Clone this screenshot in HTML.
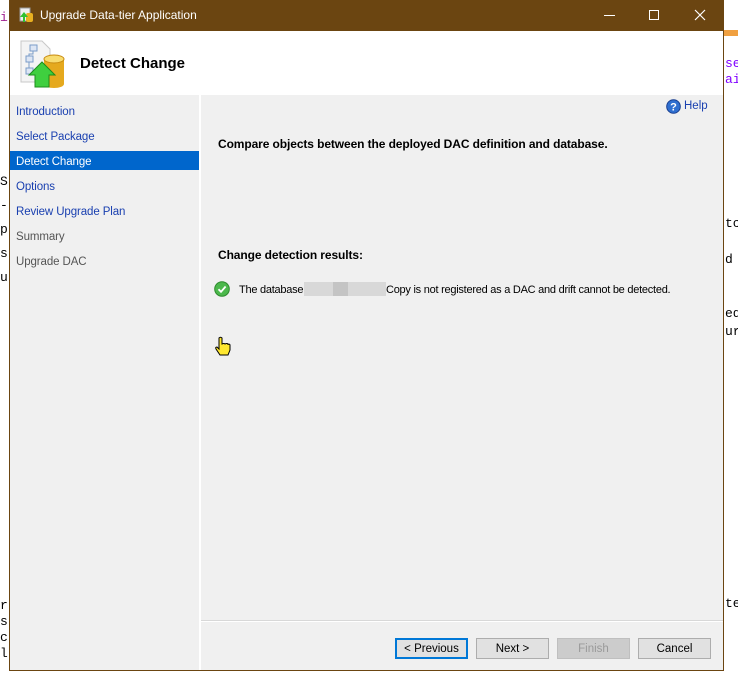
<!DOCTYPE html>
<html><head><meta charset="utf-8"><style>
*{margin:0;padding:0;box-sizing:border-box}
body{width:738px;height:676px;background:#fff;position:relative;overflow:hidden;font-family:"Liberation Sans",Arial,sans-serif;font-size:11px;color:#000}
.abs{position:absolute;white-space:nowrap}
.mono{font-family:"Liberation Mono",monospace;font-size:13px;position:absolute}
.nav{position:absolute;left:10px;top:4px;width:189px}
.nav div{position:absolute;left:6px;font-size:11.5px;color:#1a40b0;white-space:nowrap;letter-spacing:-0.1px}
.btn{position:absolute;top:638px;height:21px;width:73px;background:#e1e1e1;border:1px solid #adadad;text-align:center;line-height:20px;font-size:11.5px}
.t{letter-spacing:-0.25px}
</style></head><body>
<div class="mono" style="left:0;top:174px">S</div>
<div class="mono" style="left:0;top:198px">-</div>
<div class="mono" style="left:0;top:222px">p</div>
<div class="mono" style="left:0;top:246px">s</div>
<div class="mono" style="left:0;top:270px">u</div>
<div class="mono" style="left:0;top:598px">r</div>
<div class="mono" style="left:0;top:614px">s</div>
<div class="mono" style="left:0;top:630px">c</div>
<div class="mono" style="left:0;top:646px">l</div>
<div class="mono" style="left:0;top:10px;color:#a02090">i</div>
<div class="abs" style="left:724px;top:30px;width:14px;height:6px;background:#f0a040"></div>
<div class="mono" style="left:725px;top:56px;color:#8000ff">se</div>
<div class="mono" style="left:725px;top:72px;color:#8000ff">ai</div>
<div class="mono" style="left:725px;top:216px">tc</div>
<div class="mono" style="left:725px;top:252px">d</div>
<div class="mono" style="left:725px;top:306px">ed</div>
<div class="mono" style="left:725px;top:324px">ur</div>
<div class="mono" style="left:725px;top:596px">te</div>

<div class="abs" style="left:9px;top:0;width:715px;height:671px;background:#6b4511"></div>
<div class="abs" style="left:10px;top:31px;width:713px;height:639px;background:#f0f0f0"></div>
<svg class="abs" style="left:18px;top:7px" width="16" height="16"><rect x="2" y="1" width="10" height="13" fill="#eee" stroke="#999"/><rect x="8" y="6" width="7" height="9" rx="2" fill="#e8b020"/><path d="M5 15V10H2L6 5 10 10H7V15Z" fill="#30c030"/></svg>
<div class="abs" style="left:40px;top:8px;color:#fff;font-size:12px">Upgrade Data-tier Application</div>
<div class="abs" style="left:604px;top:15px;width:11px;height:1px;background:#fff"></div>
<div class="abs" style="left:649px;top:10px;width:10px;height:10px;border:1px solid #fff"></div>
<svg class="abs" style="left:694px;top:9px" width="12" height="12"><path d="M1 1L11 11M11 1L1 11" stroke="#fff" stroke-width="1.2"/></svg>
<div class="abs" style="left:10px;top:31px;width:713px;height:64px;background:#fff"></div>
<svg class="abs" style="left:18px;top:38px" width="50" height="50">
<path d="M3 3H24L32 11V44H3Z" fill="#f4f4f4" stroke="#c8c8c8"/>
<rect x="12" y="7" width="7" height="6" fill="#dde6f4" stroke="#7a9cc8"/><rect x="8" y="18" width="7" height="6" fill="#dde6f4" stroke="#7a9cc8"/><rect x="8" y="30" width="7" height="6" fill="#dde6f4" stroke="#7a9cc8"/>
<path d="M15 13V16H11V18M11 24V30" stroke="#7a9cc8" fill="none"/>
<path d="M26 21V46A10 4 0 0 0 46 46V21Z" fill="#e5a91e"/><ellipse cx="36" cy="21" rx="10" ry="4" fill="#f8dc70" stroke="#c88a10"/>
<path d="M17 49V37H11L24 24 37 37H31V49Z" fill="#3fcf3f" stroke="#1c8c1c"/>
</svg>
<div class="abs" style="left:80px;top:55px;font-size:15px;font-weight:bold">Detect Change</div>
<div class="abs" style="left:199px;top:95px;width:2px;height:575px;background:#fff"></div>
<div class="abs" style="left:10px;top:151px;width:189px;height:19px;background:#0066cc"></div>
<div class="nav">
<div style="top:102px">Introduction</div>
<div style="top:127px">Select Package</div>
<div style="top:152px;color:#fff">Detect Change</div>
<div style="top:177px">Options</div>
<div style="top:202px">Review Upgrade Plan</div>
<div style="top:227px;color:#555">Summary</div>
<div style="top:252px;color:#555">Upgrade DAC</div>
</div>
<svg class="abs" style="left:666px;top:99px" width="15" height="15"><circle cx="7.5" cy="7.5" r="6.8" fill="#2f6fd0" stroke="#1a3f90"/><text x="7.5" y="11.5" font-size="11" font-weight="bold" fill="#fff" text-anchor="middle" font-family="Liberation Sans">?</text></svg>
<div class="abs" style="left:684px;top:100px;color:#1a40b0;font-size:11.5px">Help</div>
<div class="abs" style="left:218px;top:137px;font-weight:bold;font-size:12px;letter-spacing:-0.1px">Compare objects between the deployed DAC definition and database.</div>
<div class="abs" style="left:218px;top:248px;font-weight:bold;font-size:12px;letter-spacing:-0.1px">Change detection results:</div>
<svg class="abs" style="left:214px;top:281px" width="16" height="16"><circle cx="8" cy="8" r="7.3" fill="#4cb84c" stroke="#2d8a2d"/><path d="M4.5 8.3L7 10.8 11.6 5.5" stroke="#fff" stroke-width="1.8" fill="none"/></svg>
<div class="abs t" style="left:239px;top:284px">The database</div>
<div class="abs" style="left:304px;top:282px;width:82px;height:14px;background:#d8d8d8"></div>
<div class="abs" style="left:333px;top:282px;width:15px;height:14px;background:#c4c4c4"></div>
<div class="abs t" style="left:386px;top:284px">Copy is not registered as a DAC and drift cannot be detected.</div>
<svg class="abs" style="left:214px;top:336px" width="18" height="22"><path d="M5 2V13L3 11Q1 11 2 13L6 19H14L16 14V9Q16 8 14 8V9 8Q13 7 11 8 10 7 8 8V2Q6.5 0.5 5 2Z" fill="#ffe830" stroke="#000" stroke-width="1"/></svg>
<div class="abs" style="left:201px;top:620px;width:522px;height:1px;background:#d8d8d8"></div>
<div class="abs" style="left:201px;top:621px;width:522px;height:1px;background:#fff"></div>
<div class="btn" style="left:395px;border:2px solid #0078d7;line-height:18px">&lt; Previous</div>
<div class="btn" style="left:476px">Next &gt;</div>
<div class="btn" style="left:557px;background:#ccc;border-color:#bfbfbf;color:#9a9a9a">Finish</div>
<div class="btn" style="left:638px">Cancel</div>
</body></html>
